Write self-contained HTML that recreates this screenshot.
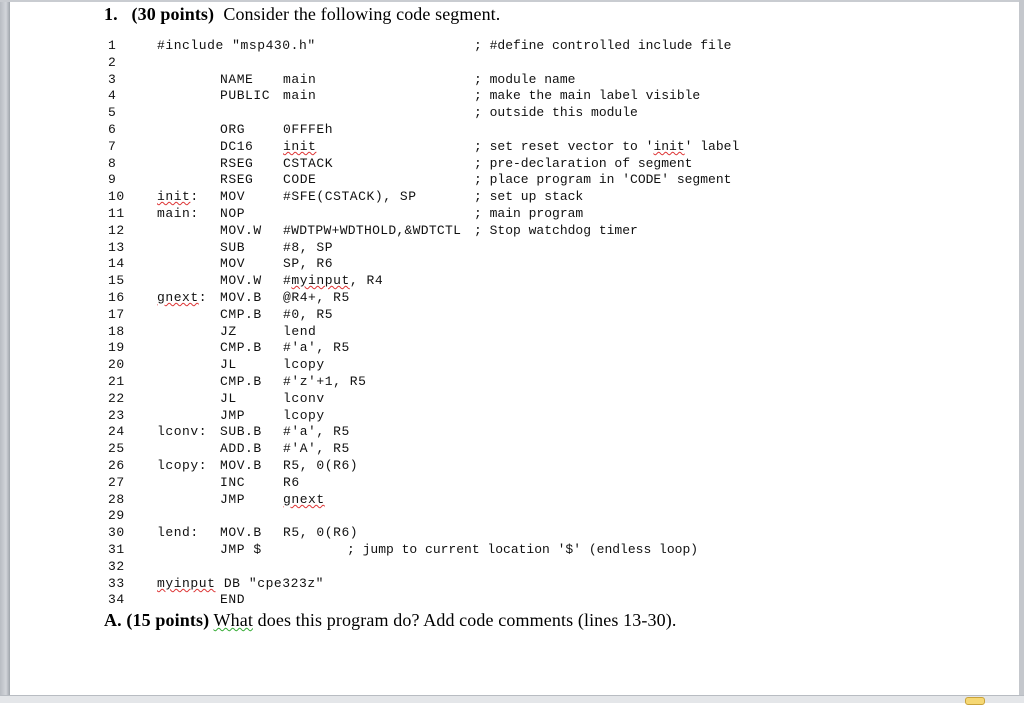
<!DOCTYPE html>
<html><head><meta charset="utf-8"><style>
html,body{margin:0;padding:0}
body{width:1024px;height:702px;overflow:hidden;background:#fff;position:relative;font-family:"Liberation Serif",serif}
.lb{position:absolute;left:0;top:0;width:10px;height:702px;background:linear-gradient(90deg,#b8bcc2,#d2d5da 60%,#9ea3aa)}
.tb{position:absolute;left:0;top:0;width:1024px;height:2px;background:#c9ccd1}
.rb{position:absolute;left:1019px;top:0;width:5px;height:702px;background:#c4c7cc}
.bb{position:absolute;left:0;top:695px;width:1024px;height:7px;background:#e4e6e9;border-top:1px solid #b8bcc2}
.tab{position:absolute;left:965px;top:697px;width:18px;height:6px;background:#f6d874;border:1px solid #c9a23a;border-radius:3px}
.t{position:absolute;font-size:18px;color:#000;white-space:nowrap}
.r{position:absolute;left:0;width:1000px;height:17px;font-family:"Liberation Mono",monospace;font-size:13px;letter-spacing:0.55px;color:#111;white-space:pre}
.r span{position:absolute;top:0}
.n{left:108px}.l{left:157px}.o{left:220px}.a{left:283px}.c{left:474px;letter-spacing:0}
.u{text-decoration:underline wavy #d33;text-decoration-thickness:1px}
</style></head><body>
<div class="lb"></div><div class="tb"></div><div class="rb"></div><div class="bb"></div><div class="tab"></div>
<div class="t" style="left:104px;top:4px;letter-spacing:0.1px"><b>1.</b>&nbsp;&nbsp;&nbsp;<b>(30 points)</b>&nbsp; Consider the following code segment.</div>
<div class="r" style="top:38px"><span class="n">1</span><span class="l">#include "msp430.h"</span><span class="c">; #define controlled include file</span></div>
<div class="r" style="top:55px"><span class="n">2</span></div>
<div class="r" style="top:72px"><span class="n">3</span><span class="o">NAME</span><span class="a">main</span><span class="c">; module name</span></div>
<div class="r" style="top:88px"><span class="n">4</span><span class="o">PUBLIC</span><span class="a">main</span><span class="c">; make the main label visible</span></div>
<div class="r" style="top:105px"><span class="n">5</span><span class="c">; outside this module</span></div>
<div class="r" style="top:122px"><span class="n">6</span><span class="o">ORG</span><span class="a">0FFFEh</span></div>
<div class="r" style="top:139px"><span class="n">7</span><span class="o">DC16</span><span class="a"><span class="u" style="position:static">init</span></span><span class="c">; set reset vector to '<span class="u" style="position:static">init</span>' label</span></div>
<div class="r" style="top:156px"><span class="n">8</span><span class="o">RSEG</span><span class="a">CSTACK</span><span class="c">; pre-declaration of segment</span></div>
<div class="r" style="top:172px"><span class="n">9</span><span class="o">RSEG</span><span class="a">CODE</span><span class="c">; place program in 'CODE' segment</span></div>
<div class="r" style="top:189px"><span class="n">10</span><span class="l"><span class="u" style="position:static">init</span>:</span><span class="o">MOV</span><span class="a">#SFE(CSTACK), SP</span><span class="c">; set up stack</span></div>
<div class="r" style="top:206px"><span class="n">11</span><span class="l">main:</span><span class="o">NOP</span><span class="c">; main program</span></div>
<div class="r" style="top:223px"><span class="n">12</span><span class="o">MOV.W</span><span class="a" style="letter-spacing:0.3px">#WDTPW+WDTHOLD,&amp;WDTCTL</span><span class="c">; Stop watchdog timer</span></div>
<div class="r" style="top:240px"><span class="n">13</span><span class="o">SUB</span><span class="a">#8, SP</span></div>
<div class="r" style="top:256px"><span class="n">14</span><span class="o">MOV</span><span class="a">SP, R6</span></div>
<div class="r" style="top:273px"><span class="n">15</span><span class="o">MOV.W</span><span class="a">#<span class="u" style="position:static">myinput</span>, R4</span></div>
<div class="r" style="top:290px"><span class="n">16</span><span class="l"><span class="u" style="position:static">gnext</span>:</span><span class="o">MOV.B</span><span class="a">@R4+, R5</span></div>
<div class="r" style="top:307px"><span class="n">17</span><span class="o">CMP.B</span><span class="a">#0, R5</span></div>
<div class="r" style="top:324px"><span class="n">18</span><span class="o">JZ</span><span class="a">lend</span></div>
<div class="r" style="top:340px"><span class="n">19</span><span class="o">CMP.B</span><span class="a">#'a', R5</span></div>
<div class="r" style="top:357px"><span class="n">20</span><span class="o">JL</span><span class="a">lcopy</span></div>
<div class="r" style="top:374px"><span class="n">21</span><span class="o">CMP.B</span><span class="a">#'z'+1, R5</span></div>
<div class="r" style="top:391px"><span class="n">22</span><span class="o">JL</span><span class="a">lconv</span></div>
<div class="r" style="top:408px"><span class="n">23</span><span class="o">JMP</span><span class="a">lcopy</span></div>
<div class="r" style="top:424px"><span class="n">24</span><span class="l">lconv:</span><span class="o">SUB.B</span><span class="a">#'a', R5</span></div>
<div class="r" style="top:441px"><span class="n">25</span><span class="o">ADD.B</span><span class="a">#'A', R5</span></div>
<div class="r" style="top:458px"><span class="n">26</span><span class="l">lcopy:</span><span class="o">MOV.B</span><span class="a">R5, 0(R6)</span></div>
<div class="r" style="top:475px"><span class="n">27</span><span class="o">INC</span><span class="a">R6</span></div>
<div class="r" style="top:492px"><span class="n">28</span><span class="o">JMP</span><span class="a"><span class="u" style="position:static">gnext</span></span></div>
<div class="r" style="top:508px"><span class="n">29</span></div>
<div class="r" style="top:525px"><span class="n">30</span><span class="l">lend:</span><span class="o">MOV.B</span><span class="a">R5, 0(R6)</span></div>
<div class="r" style="top:542px"><span class="n">31</span><span class="o">JMP $</span><span class="c" style="left:347px">; jump to current location '$' (endless loop)</span></div>
<div class="r" style="top:559px"><span class="n">32</span></div>
<div class="r" style="top:576px"><span class="n">33</span><span class="l"><span class="u" style="position:static">myinput</span> DB "cpe323z"</span></div>
<div class="r" style="top:592px"><span class="n">34</span><span class="o">END</span></div>
<div class="t" style="left:104px;top:610px;letter-spacing:0.12px"><b>A. (15 points)</b> <span style="text-decoration:underline wavy #3a3;text-decoration-thickness:1px">What</span> does this program do? Add code comments (lines 13-30).</div>
</body></html>
